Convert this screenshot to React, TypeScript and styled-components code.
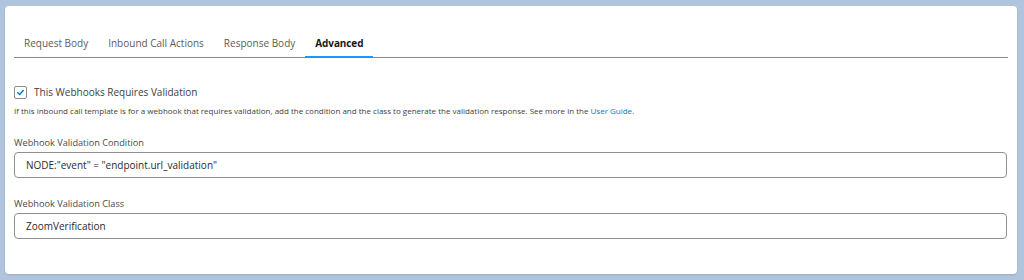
import React from "react";
import styled, { createGlobalStyle } from "styled-components";

const GlobalStyle = createGlobalStyle`
  html, body {
    margin: 0;
    padding: 0;
    background-color: #b0c4de;
    font-family: "Open Sans", "Noto Sans", sans-serif;
  }
`;

const Page = styled.div`
  padding: 6px 7px 6px 5px;
`;

const Card = styled.div`
  background-color: #fff;
  border-radius: 4px;
  height: 268px;
  box-sizing: border-box;
  padding: 24px 9px 0 9px;
  box-shadow: 0 1px 2px rgba(0, 0, 0, 0.12);
`;

const Tabs = styled.div`
  display: flex;
  border-bottom: 1px solid #8a8a8a;
`;

const Tab = styled.div<{ $active?: boolean }>`
  padding: 0 10px;
  height: 28px;
  line-height: 27px;
  font-size: 10px;
  color: ${({ $active }) => ($active ? "#181818" : "#5c5c5c")};
  font-weight: ${({ $active }) => ($active ? 700 : 400)};
  letter-spacing: ${({ $active }) => ($active ? "-0.1px" : "0")};
  box-sizing: border-box;
  border-bottom: 2px solid
    ${({ $active }) => ($active ? "#1b96ff" : "transparent")};
  margin-bottom: -1px;
`;

const Body = styled.div`
  padding-right: 1px;
`;

const CheckRow = styled.label`
  display: flex;
  align-items: center;
  gap: 7px;
  margin-top: 27px;
  font-size: 10px;
  color: #3e3e3c;
`;

const Box = styled.span`
  width: 13px;
  height: 13px;
  box-sizing: border-box;
  border: 1px solid #8c8c8c;
  border-radius: 2px;
  display: flex;
  align-items: center;
  justify-content: center;
`;

const Help = styled.p`
  margin: 6px 0 0;
  font-size: 8px;
  color: #3e3e3c;

  a {
    color: #0176d3;
    text-decoration: none;
  }
`;

const Field = styled.div<{ $top: number }>`
  margin-top: ${({ $top }) => $top}px;
`;

const Label = styled.div`
  font-size: 9.2px;
  color: #4a4a4a;
  line-height: 14px;
  margin-bottom: 2px;
`;

const Input = styled.div`
  height: 26px;
  box-sizing: border-box;
  border: 1px solid #8f8f8f;
  border-radius: 4px;
  padding: 0 11px;
  display: flex;
  align-items: center;
  font-size: 10px;
  color: #2b2b2b;
`;

const App = () => {
  return (
    <>
      <GlobalStyle />
      <Page>
        <Card>
          <Tabs>
            <Tab>Request Body</Tab>
            <Tab>Inbound Call Actions</Tab>
            <Tab>Response Body</Tab>
            <Tab $active>Advanced</Tab>
          </Tabs>
          <Body>
            <CheckRow>
              <Box>
                <svg width="9" height="9" viewBox="0 0 10 10">
                  <path
                    d="M2 5.2 L4.1 7.2 L8 2.8"
                    fill="none"
                    stroke="#0176d3"
                    strokeWidth="1.6"
                    strokeLinecap="round"
                    strokeLinejoin="round"
                  />
                </svg>
              </Box>
              This Webhooks Requires Validation
            </CheckRow>
            <Help>
              If this inbound call template is for a webhook that requires
              validation, add the condition and the class to generate the
              validation response. See more in the <a href="#">User Guide</a>.
            </Help>
            <Field $top={20}>
              <Label>Webhook Validation Condition</Label>
              <Input>NODE:"event" = "endpoint.url_validation"</Input>
            </Field>
            <Field $top={19}>
              <Label>Webhook Validation Class</Label>
              <Input>ZoomVerification</Input>
            </Field>
          </Body>
        </Card>
      </Page>
    </>
  );
};

export default App;
